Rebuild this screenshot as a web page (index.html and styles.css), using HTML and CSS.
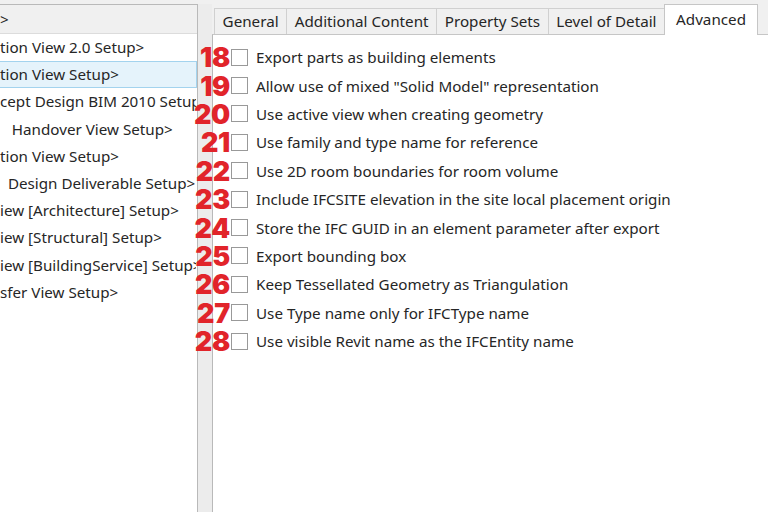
FILE: index.html
```html
<!DOCTYPE html>
<html lang="en">
<head>
<meta charset="utf-8">
<title>IFC Export Setup</title>
<link rel="stylesheet" href="styles.css">
</head>
<body>
<div class="window">
  <div class="list">
    <div class="list-head">&gt;</div>
    <div class="item">tion View 2.0 Setup&gt;</div>
    <div class="item selected">tion View Setup&gt;</div>
    <div class="item">cept Design BIM 2010 Setup&gt;</div>
    <div class="item">   Handover View Setup&gt;</div>
    <div class="item">tion View Setup&gt;</div>
    <div class="item">  Design Deliverable Setup&gt;</div>
    <div class="item">iew [Architecture] Setup&gt;</div>
    <div class="item">iew [Structural] Setup&gt;</div>
    <div class="item">iew [BuildingService] Setup&gt;</div>
    <div class="item">sfer View Setup&gt;</div>
  </div>
  <div class="gutter"></div>
  <div class="pane">
    <div class="tabstrip">
      <div class="tab">General</div>
      <div class="tab">Additional Content</div>
      <div class="tab">Property Sets</div>
      <div class="tab">Level of Detail</div>
      <div class="tab active">Advanced</div>
    </div>
    <div class="page">
      <label class="opt"><span class="box"><span class="num">18</span></span><span class="label">Export parts as building elements</span></label>
      <label class="opt"><span class="box"><span class="num">19</span></span><span class="label">Allow use of mixed "Solid Model" representation</span></label>
      <label class="opt"><span class="box"><span class="num">20</span></span><span class="label">Use active view when creating geometry</span></label>
      <label class="opt"><span class="box"><span class="num">21</span></span><span class="label">Use family and type name for reference</span></label>
      <label class="opt"><span class="box"><span class="num">22</span></span><span class="label">Use 2D room boundaries for room volume</span></label>
      <label class="opt"><span class="box"><span class="num">23</span></span><span class="label">Include IFCSITE elevation in the site local placement origin</span></label>
      <label class="opt"><span class="box"><span class="num">24</span></span><span class="label">Store the IFC GUID in an element parameter after export</span></label>
      <label class="opt"><span class="box"><span class="num">25</span></span><span class="label">Export bounding box</span></label>
      <label class="opt"><span class="box"><span class="num">26</span></span><span class="label">Keep Tessellated Geometry as Triangulation</span></label>
      <label class="opt"><span class="box"><span class="num">27</span></span><span class="label">Use Type name only for IFCType name</span></label>
      <label class="opt"><span class="box"><span class="num">28</span></span><span class="label">Use visible Revit name as the IFCEntity name</span></label>
    </div>
  </div>
</div>
</body>
</html>
```

FILE: styles.css
```css
html, body {
  margin: 0;
  padding: 0;
}
body {
  width: 768px;
  height: 512px;
  overflow: hidden;
  background: #f0f0f0;
  font-family: "Noto Sans", "Open Sans", sans-serif;
  font-size: 15.2px;
  color: #262626;
}
.window {
  display: flex;
  height: 512px;
  padding-top: 4px;
  box-sizing: border-box;
}
.list {
  flex: none;
  width: 198px;
  box-sizing: border-box;
  background: #fff;
  border-top: 1px solid #b9b9b9;
  border-right: 1px solid #b9b9b9;
  overflow: hidden;
}
.list-head {
  height: 28px;
  line-height: 28px;
  background: #f0f0f0;
  border-bottom: 1px solid #dcdcdc;
  white-space: pre;
}
.item {
  height: 27.2px;
  line-height: 25px;
  box-sizing: border-box;
  border: 1px solid transparent;
  border-left: none;
  white-space: pre;
  overflow: hidden;
}
.item.selected {
  background: #e5f3fb;
  border-color: #a3d3ee;
}
.gutter {
  flex: none;
  width: 14px;
  background: #ececec;
}
.pane {
  flex: 1;
  display: flex;
  flex-direction: column;
}
.tabstrip {
  height: 30px;
  display: flex;
  align-items: flex-end;
  padding-left: 2px;
  flex: none;
}
.tab {
  height: 26px;
  line-height: 24px;
  box-sizing: border-box;
  padding: 0 7.6px;
  background: #f0f0f0;
  border: 1px solid #d0d0d0;
  border-bottom: none;
  margin-right: -1px;
  white-space: nowrap;
}
.tab.active {
  position: relative;
  z-index: 1;
  height: 31px;
  margin-bottom: -1px;
  line-height: 28px;
  background: #fff;
  padding: 0 11px;
  border-color: #c6c6c6;
}
.page {
  flex: 1;
  background: #fff;
  border-top: 1px solid #c6c6c6;
  border-left: 1px solid #b9b9b9;
  padding: 8px 0 0 18px;
}
.opt {
  display: flex;
  align-items: center;
  height: 28.4px;
  gap: 8px;
}
.box {
  position: relative;
  width: 17px;
  height: 17px;
  box-sizing: border-box;
  border: 1px solid #999;
  background: #fff;
  flex: none;
}
.num {
  position: absolute;
  right: calc(100% + 2px);
  top: 50%;
  transform: translateY(-50%);
  font-family: "Inter", "DejaVu Sans", sans-serif;
  font-weight: 900;
  font-size: 27px;
  line-height: 1;
  letter-spacing: -0.3px;
  color: #e1242a;
}
.label {
  white-space: nowrap;
}
```
